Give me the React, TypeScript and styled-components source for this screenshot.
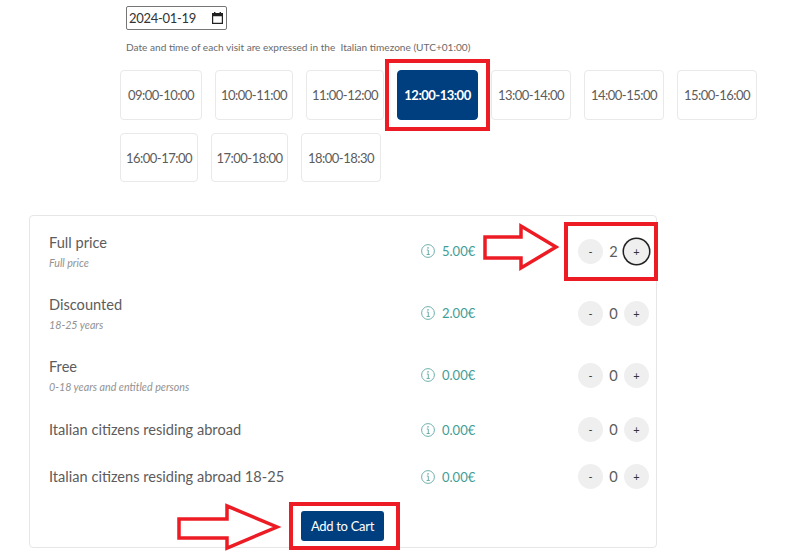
import { createGlobalStyle } from "styled-components";
import styled from "styled-components";

const GlobalStyle = createGlobalStyle`
  html, body {
    margin: 0;
    padding: 0;
    background: #fff;
    overflow: hidden;
    font-family: "Lato", "Open Sans", sans-serif;
    color: #555;
  }
`;

const Page = styled.div`
  position: relative;
  width: 800px;
  height: 556px;
  overflow: hidden;
`;

const DateBlock = styled.div`
  padding: 6px 0 0 126px;
`;

const DateField = styled.label`
  display: flex;
  align-items: center;
  justify-content: space-between;
  box-sizing: border-box;
  width: 101px;
  height: 24px;
  padding: 0 3px 0 2px;
  border: 1px solid #767676;
  border-radius: 2px;
  background: #fff;
`;

const DateText = styled.input`
  width: 72px;
  padding: 0;
  border: none;
  outline: none;
  background: transparent;
  color: #333;
  font-family: "Lato", sans-serif;
  font-size: 13px;
  letter-spacing: -0.3px;
`;

const Note = styled.p`
  margin: 11px 0 0;
  font-size: 10.1px;
  line-height: 13px;
  color: #6a6a6a;
`;

const Slots = styled.div`
  display: flex;
  flex-wrap: wrap;
  gap: 13px;
  width: 640px;
  margin: 16px 0 0 120px;
`;

const Slot = styled.button<{ $width: number; $active?: boolean; $tall?: boolean }>`
  box-sizing: border-box;
  width: ${(p) => p.$width}px;
  height: ${(p) => (p.$tall ? 50 : 49)}px;
  padding: 0;
  border: 1px solid ${(p) => (p.$active ? "#003f7f" : "#e9e9e9")};
  border-radius: 4px;
  background: ${(p) => (p.$active ? "#003f7f" : "#fff")};
  color: ${(p) => (p.$active ? "#fff" : "#5c5c5c")};
  font-family: "Lato", sans-serif;
  font-size: 13px;
  letter-spacing: -0.5px;
  font-weight: ${(p) => (p.$active ? 700 : 400)};
`;

const Card = styled.div`
  box-sizing: border-box;
  width: 628px;
  height: 333px;
  margin: 33px 0 0 29px;
  padding: 4px 6px 0 19px;
  border: 1px solid #e6e6e6;
  border-radius: 4px;
`;

const Row = styled.div<{ $height: number }>`
  display: grid;
  grid-template-columns: 372px 157px auto;
  align-items: center;
  height: ${(p) => p.$height}px;
`;

const Label = styled.div`
  padding-top: 1px;
`;

const Title = styled.div`
  font-size: 14.6px;
  line-height: 20px;
  color: #5c5c5c;
`;

const Sub = styled.div`
  margin-top: 3px;
  font-size: 10.7px;
  line-height: 14px;
  font-style: italic;
  color: #929292;
`;

const Price = styled.div`
  display: flex;
  align-items: center;
  gap: 7px;
  font-size: 13px;
  color: #3f9d97;
`;

const Stepper = styled.div`
  display: flex;
  align-items: center;
`;

const Round = styled.button<{ $ring?: boolean }>`
  box-sizing: border-box;
  width: 25px;
  height: 25px;
  padding: 0;
  border: none;
  border-radius: 50%;
  background: #efefef;
  box-shadow: ${(p) => (p.$ring ? "0 0 0 1.5px #222" : "none")};
  color: #333;
  font-family: "Lato", sans-serif;
  font-size: 11px;
  line-height: 25px;
`;

const Count = styled.span`
  width: 21px;
  text-align: center;
  font-size: 14.6px;
  color: #5c5c5c;
`;

const CartRow = styled.div`
  display: flex;
  justify-content: center;
  margin: 11px 0 0 -7px;
  padding-right: 7px;
`;

const CartButton = styled.button`
  width: 83px;
  height: 30px;
  padding: 0;
  border: none;
  border-radius: 3px;
  background: #003f7f;
  color: #fff;
  font-family: "Lato", sans-serif;
  font-size: 13px;
  letter-spacing: -0.3px;
`;

const Mark = styled.div<{ $x: number; $y: number; $w: number; $h: number }>`
  position: absolute;
  box-sizing: border-box;
  left: ${(p) => p.$x}px;
  top: ${(p) => p.$y}px;
  width: ${(p) => p.$w}px;
  height: ${(p) => p.$h}px;
  border: 4px solid #ed1c24;
  pointer-events: none;
`;

const ArrowSvg = styled.svg<{ $x: number; $y: number }>`
  position: absolute;
  left: ${(p) => p.$x}px;
  top: ${(p) => p.$y}px;
  pointer-events: none;
`;

const slots = [
  { label: "09:00-10:00", width: 82, tall: true },
  { label: "10:00-11:00", width: 78, tall: true },
  { label: "11:00-12:00", width: 78, tall: true },
  { label: "12:00-13:00", width: 81, active: true, tall: true },
  { label: "13:00-14:00", width: 80, tall: true },
  { label: "14:00-15:00", width: 80, tall: true },
  { label: "15:00-16:00", width: 80, tall: true },
  { label: "16:00-17:00", width: 78 },
  { label: "17:00-18:00", width: 77 },
  { label: "18:00-18:30", width: 80 },
];

const tickets = [
  { name: "Full price", sub: "Full price", price: "5.00€", qty: 2, height: 62, ring: true },
  { name: "Discounted", sub: "18-25 years", price: "2.00€", qty: 0, height: 62 },
  { name: "Free", sub: "0-18 years and entitled persons", price: "0.00€", qty: 0, height: 62 },
  { name: "Italian citizens residing abroad", price: "0.00€", qty: 0, height: 47 },
  { name: "Italian citizens residing abroad 18-25", price: "0.00€", qty: 0, height: 47 },
];

const CalendarIcon = () => (
  <svg width="11" height="12" viewBox="0 0 11 12">
    <path
      d="M2 0h1.4v1h4.2V0H9v1h2v11H0V1h2V0zM1.2 4.2v6.6h8.6V4.2H1.2z"
      fill="#222"
      fillRule="evenodd"
    />
  </svg>
);

const InfoIcon = () => (
  <svg width="14" height="14" viewBox="0 0 14 14" fill="none" stroke="#6fb0ac" strokeWidth="1">
    <circle cx="7" cy="7" r="6.4" />
    <circle cx="7" cy="3.9" r="0.8" fill="#6fb0ac" stroke="none" />
    <path d="M5.8 6H7.3V10.4M5.6 10.5H8.8" />
  </svg>
);

const Arrow = ({ x, y, width, height, points }: { x: number; y: number; width: number; height: number; points: string }) => (
  <ArrowSvg $x={x} $y={y} width={width} height={height} viewBox={`0 0 ${width} ${height}`}>
    <polygon points={points} fill="#fff" stroke="#ed1c24" strokeWidth="3.5" strokeLinejoin="miter" />
  </ArrowSvg>
);

const App = () => {
  return (
    <Page>
      <GlobalStyle />
      <DateBlock>
        <DateField>
          <DateText type="text" defaultValue="2024-01-19" />
          <CalendarIcon />
        </DateField>
        <Note>Date and time of each visit are expressed in the&nbsp; Italian timezone (UTC+01:00)</Note>
      </DateBlock>

      <Slots>
        {slots.map((slot) => (
          <Slot key={slot.label} $width={slot.width} $active={slot.active} $tall={slot.tall}>
            {slot.label}
          </Slot>
        ))}
      </Slots>

      <Card>
        {tickets.map((ticket) => (
          <Row key={ticket.name} $height={ticket.height}>
            <Label>
              <Title>{ticket.name}</Title>
              {ticket.sub && <Sub>{ticket.sub}</Sub>}
            </Label>
            <Price>
              <InfoIcon />
              {ticket.price}
            </Price>
            <Stepper>
              <Round>-</Round>
              <Count>{ticket.qty}</Count>
              <Round $ring={ticket.ring}>+</Round>
            </Stepper>
          </Row>
        ))}
        <CartRow>
          <CartButton>Add to Cart</CartButton>
        </CartRow>
      </Card>

      <Mark $x={385} $y={59} $w={105} $h={72} />
      <Mark $x={564} $y={222} $w={94} $h={59} />
      <Mark $x={289} $y={502} $w={111} $h={48} />

      <Arrow x={480} y={220} width={82} height={54} points="5,17 41,17 41,6 76,27 41,48 41,38 5,38" />
      <Arrow x={174} y={500} width={108} height={54} points="5,19 53,19 53,6 103,27 53,48 53,38 5,38" />
    </Page>
  );
};

export default App;
